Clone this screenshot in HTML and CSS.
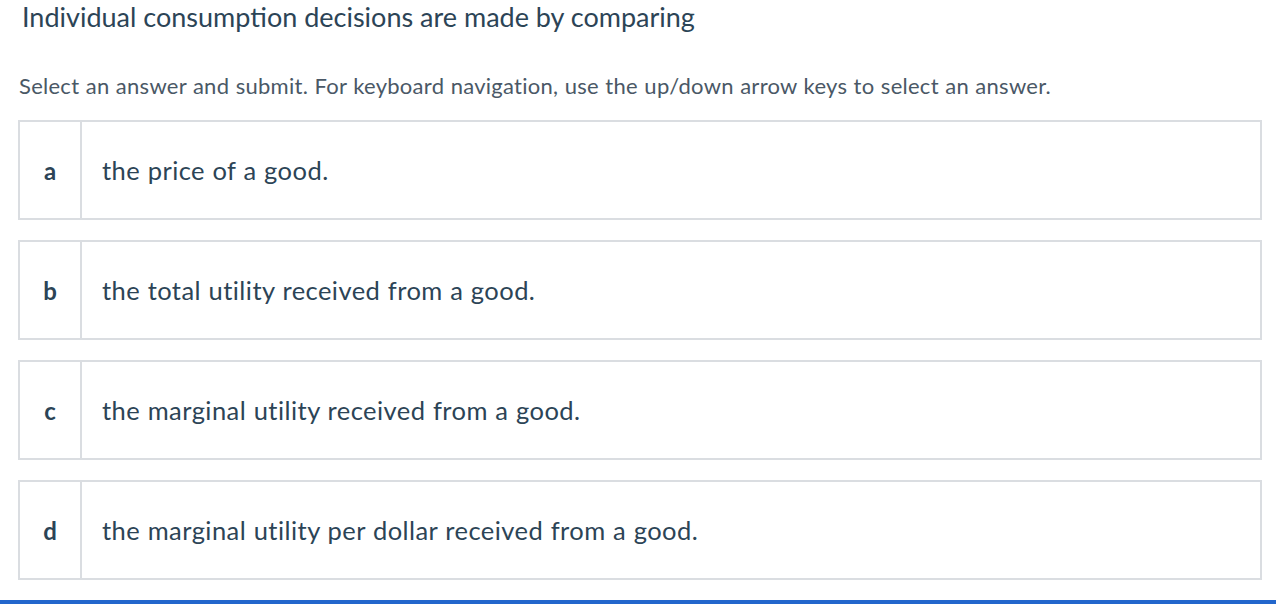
FILE: index.html
```html
<!DOCTYPE html>
<html lang="en">
<head>
<meta charset="utf-8">
<title>Question</title>
<link rel="stylesheet" href="styles.css">
</head>
<body>
<main class="page">
  <h1 class="question">Individual consumption decisions are made by comparing</h1>
  <p class="instructions">Select an answer and submit. For keyboard navigation, use the up/down arrow keys to select an answer.</p>
  <ul class="options" role="radiogroup">
    <li class="option" role="radio" aria-checked="false"><span class="letter">a</span><span class="answer">the price of a good.</span></li>
    <li class="option" role="radio" aria-checked="false"><span class="letter">b</span><span class="answer">the total utility received from a good.</span></li>
    <li class="option" role="radio" aria-checked="false"><span class="letter">c</span><span class="answer">the marginal utility received from a good.</span></li>
    <li class="option" role="radio" aria-checked="false"><span class="letter">d</span><span class="answer">the marginal utility per dollar received from a good.</span></li>
  </ul>
</main>
<div class="bottom-bar"></div>
</body>
</html>
```
FILE: styles.css
```css
html, body {
  margin: 0;
  padding: 0;
  background: #ffffff;
}
body {
  font-family: "Lato", "Noto Sans", sans-serif;
  color: #2c4456;
  height: 604px;
  overflow: hidden;
  display: flex;
  flex-direction: column;
}
.page {
  flex: 1;
  padding: 0 14px 0 18px;
}
.question {
  margin: 0;
  padding: 0 0 0 4px;
  font-size: 27px;
  font-weight: 400;
  line-height: 33px;
  color: #2c4456;
}
.instructions {
  margin: 39px 0 0 1px;
  font-size: 22px;
  letter-spacing: 0.27px;
  word-spacing: 0.5px;
  line-height: 28px;
  color: #4a5866;
}
.options {
  list-style: none;
  margin: 20px 0 0 0;
  padding: 0;
  display: flex;
  flex-direction: column;
  gap: 20px;
}
.option {
  display: flex;
  align-items: stretch;
  height: 100px;
  box-sizing: border-box;
  border: 2px solid #dadde1;
  background: #fff;
}
.letter {
  width: 60px;
  flex: none;
  display: flex;
  align-items: center;
  justify-content: center;
  font-weight: 700;
  font-size: 24px;
  border-right: 2px solid #dadde1;
}
.answer {
  display: flex;
  align-items: center;
  padding-left: 20px;
  font-size: 25.5px;
  letter-spacing: 0.45px;
  word-spacing: 0.5px;
}
.bottom-bar {
  height: 4px;
  background: #2266cc;
  flex: none;
}
```
